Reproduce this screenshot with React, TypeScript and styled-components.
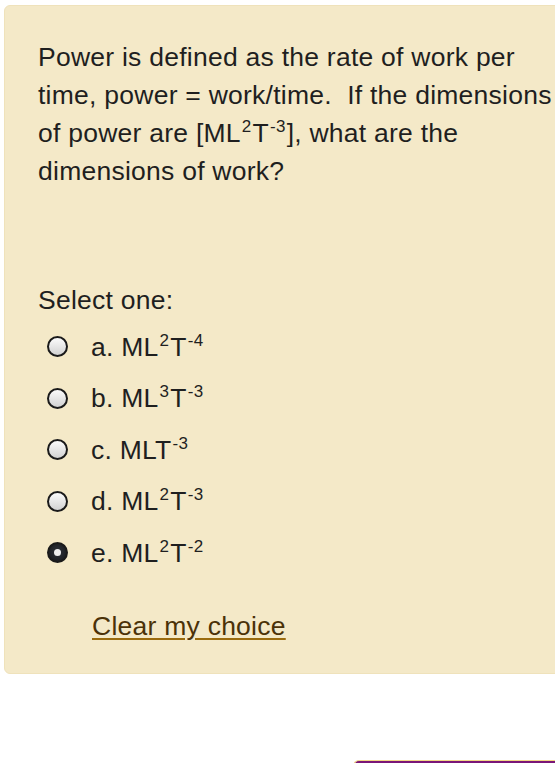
import React, { useState } from "react";
import styled, { createGlobalStyle } from "styled-components";

const GlobalStyle = createGlobalStyle`
  html, body {
    margin: 0;
    padding: 0;
    background: #ffffff;
    overflow: hidden;
  }
  body {
    font-family: "Liberation Sans", Arial, sans-serif;
  }
`;

const Page = styled.div`
  width: 555px;
  height: 763px;
  overflow: hidden;
  padding: 5px 0 0 4px;
  box-sizing: border-box;
  display: flex;
  flex-direction: column;
`;

const Panel = styled.div`
  display: flex;
  flex-direction: column;
  align-items: flex-start;
  width: 580px;
  flex-shrink: 0;
  box-sizing: border-box;
  background: #f4e9c8;
  border: 1px solid #efe2bb;
  border-radius: 6px;
  padding: 32px 0 28px 33px;
  color: #1f1f1f;
  font-size: 26.5px;
  letter-spacing: 0.25px;
`;

const Question = styled.div`
  line-height: 38px;
  white-space: nowrap;
`;

const Sup = styled.sup`
  font-size: 17px;
  line-height: 0;
  vertical-align: 10px;
  margin: 0 1px;
`;

const Prompt = styled.div`
  margin-top: 91px;
  line-height: 38px;
`;

const Options = styled.div`
  display: flex;
  flex-direction: column;
  margin-top: 2px;
  padding-left: 9px;
`;

const Option = styled.label`
  display: flex;
  align-items: center;
  gap: 23px;
  height: 51.5px;
  cursor: pointer;
`;

const Radio = styled.span<{ checked: boolean }>`
  display: flex;
  align-items: center;
  justify-content: center;
  width: 21px;
  height: 21px;
  box-sizing: border-box;
  border-radius: 50%;
  border: 2.5px solid #1a1a1a;
  background: ${(p) =>
    p.checked
      ? "radial-gradient(circle at 50% 45%, #2f333a 0%, #15171b 100%)"
      : "linear-gradient(180deg, #fbfbfb 0%, #d2d2d2 100%)"};

  &::after {
    content: "";
    display: ${(p) => (p.checked ? "block" : "none")};
    width: 7px;
    height: 7px;
    border-radius: 50%;
    background: #eeeeee;
  }
`;

const OptionText = styled.span`
  line-height: 30px;
`;

const ClearLink = styled.a`
  margin-top: 28px;
  margin-left: 54px;
  line-height: 38px;
  color: #4b3208;
  text-decoration: underline;
  text-decoration-color: #9a6b0e;
  text-underline-offset: 3px;
  text-decoration-thickness: 1.5px;
  cursor: pointer;
`;

const Footer = styled.div`
  display: flex;
  padding: 86px 0 0 349px;
`;

const NextButton = styled.div`
  width: 260px;
  height: 40px;
  flex-shrink: 0;
  background: #7a1677;
  border-top: 1px solid #f2d98a;
  border-left: 1px solid #f2d98a;
  border-radius: 6px 0 0 0;
`;

const options = [
  { key: "a", base: "ML", p1: "2", t: true, p2: "-4" },
  { key: "b", base: "ML", p1: "3", t: true, p2: "-3" },
  { key: "c", base: "MLT", p1: "", t: false, p2: "-3" },
  { key: "d", base: "ML", p1: "2", t: true, p2: "-3" },
  { key: "e", base: "ML", p1: "2", t: true, p2: "-2" },
];

export default function App() {
  const [choice, setChoice] = useState<string | null>("e");

  return (
    <Page>
      <GlobalStyle />
      <Panel>
        <Question>
          Power is defined as the rate of work per
          <br />
          time, power = work/time.&nbsp; If the dimensions
          <br />
          of power are [ML<Sup>2</Sup>T<Sup>-3</Sup>], what are the
          <br />
          dimensions of work?
        </Question>
        <Prompt>Select one:</Prompt>
        <Options>
          {options.map((o) => (
            <Option key={o.key} onClick={() => setChoice(o.key)}>
              <Radio checked={choice === o.key} />
              <OptionText>
                {o.key}. {o.base}
                {o.p1 && <Sup>{o.p1}</Sup>}
                {o.t && "T"}
                <Sup>{o.p2}</Sup>
              </OptionText>
            </Option>
          ))}
        </Options>
        <ClearLink onClick={() => setChoice(null)}>Clear my choice</ClearLink>
      </Panel>
      <Footer>
        <NextButton />
      </Footer>
    </Page>
  );
}
